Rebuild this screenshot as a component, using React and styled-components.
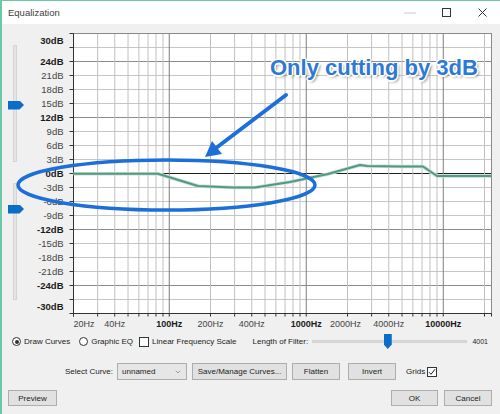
import React from 'react';
import styled, { createGlobalStyle } from 'styled-components';
import { ChevronDown } from 'lucide-react';

const Global = createGlobalStyle`
  html, body { margin: 0; padding: 0; background: #f0f0f0; }
  body { font-family: "Liberation Sans", Arial, sans-serif; }
`;

const Window = styled.div`
  width: 500px;
  height: 414px;
  box-sizing: border-box;
  border-top: 1px solid #6cc9a6;
  border-left: 2px solid #6cc9a6;
  background: #f0f0f0;
  display: flex;
  flex-direction: column;
  overflow: hidden;
`;

const TitleBar = styled.div`
  height: 23px;
  flex-shrink: 0;
  background: #fff;
  display: flex;
  align-items: center;
  padding-left: 6px;
`;

const Title = styled.span`
  flex: 1;
  font-size: 9.5px;
  color: #3c3c3c;
`;

const WinButton = styled.div`
  width: 36px;
  height: 23px;
  display: flex;
  align-items: center;
  justify-content: center;
`;

const ChartArea = styled.div`
  position: relative;
  height: 308px;
  flex-shrink: 0;
  display: flex;
`;

const SliderCol = styled.div`
  width: 28px;
  flex-shrink: 0;
  display: flex;
  flex-direction: column;
  gap: 21px;
  padding-top: 21px;
  padding-left: 11px;
  box-sizing: border-box;
`;

const VTrack = styled.div`
  position: relative;
  width: 4px;
  height: 117px;
  box-sizing: border-box;
  background: #e4e4e4;
  border: 1px solid #d4d4d4;
`;

const VThumb = styled.div`
  position: absolute;
  left: -6px;
  top: ${p => p.$at - 4.5}px;
  width: 16px;
  height: 9px;
  background: #0a6ec8;
  clip-path: polygon(0 0, 72% 0, 100% 50%, 72% 100%, 0 100%);
`;

const Overlay = styled.svg`
  position: absolute;
  left: 0;
  top: 0;
  pointer-events: none;
`;

const Callout = styled.span`
  position: absolute;
  left: 268px;
  top: 33px;
  font-family: "Liberation Sans", Arial, sans-serif;
  font-weight: bold;
  font-size: 22px;
  line-height: 1;
  white-space: nowrap;
  color: #2d79d6;
  text-shadow:
    -1px -1px 0 #fff, 1px -1px 0 #fff, -1px 1px 0 #fff, 1px 1px 0 #fff,
    0 -1.5px 0 #fff, 0 1.5px 0 #fff, -1.5px 0 0 #fff, 1.5px 0 0 #fff,
    2px 2px 3px rgba(0, 0, 0, 0.45);
`;

const Row = styled.div`
  display: flex;
  align-items: center;
  flex-shrink: 0;
  height: ${p => p.$h}px;
  margin-top: ${p => p.$mt || 0}px;
  padding-left: ${p => p.$pl || 0}px;
  padding-right: ${p => p.$pr || 0}px;
  font-size: 8px;
  color: #222;
`;

const Label = styled.span`
  margin-left: ${p => p.$ml || 0}px;
  white-space: nowrap;
  font-size: ${p => p.$fs || 8}px;
  color: #222;
`;

const Radio = styled.span`
  width: 9px;
  height: 9px;
  box-sizing: border-box;
  border-radius: 50%;
  border: 1px solid #333;
  background: #fff;
  margin-left: ${p => p.$ml || 0}px;
  display: flex;
  align-items: center;
  justify-content: center;
  &::after {
    content: '';
    width: 4px;
    height: 4px;
    border-radius: 50%;
    background: ${p => (p.$on ? '#333' : 'transparent')};
  }
`;

const Check = styled.span`
  width: 10px;
  height: 10px;
  box-sizing: border-box;
  border: 1px solid #333;
  background: #fff;
  margin-left: ${p => p.$ml || 0}px;
  display: flex;
  align-items: center;
  justify-content: center;
`;

const HTrack = styled.div`
  position: relative;
  flex: 1;
  height: 3px;
  margin-left: ${p => p.$ml || 0}px;
  background: #dcdcdc;
  border: 1px solid #d2d2d2;
  box-sizing: border-box;
`;

const HThumb = styled.div`
  position: absolute;
  left: calc(${p => p.$pos}% - 4px);
  top: -7px;
  width: 8px;
  height: 15px;
  background: #0a6ec8;
  clip-path: polygon(0 0, 100% 0, 100% 70%, 50% 100%, 0 70%);
`;

const Button = styled.div`
  width: ${p => p.$w}px;
  height: ${p => p.$hh || 17}px;
  margin-left: ${p => p.$ml || 0}px;
  box-sizing: border-box;
  border: 1px solid #adadad;
  background: #e1e1e1;
  display: flex;
  align-items: center;
  justify-content: center;
  font-size: 8px;
  color: #222;
  white-space: nowrap;
`;

const Select = styled.div`
  width: 70px;
  height: 17px;
  margin-left: ${p => p.$ml || 0}px;
  box-sizing: border-box;
  border: 1px solid #adadad;
  background: #e6e6e6;
  display: flex;
  align-items: center;
  padding: 0 4px 0 4px;
  font-size: 8px;
  color: #222;
  justify-content: space-between;
`;

const Spacer = styled.div`
  flex: 1;
`;

const fx = f => 73.5 + 137 * Math.log10(f / 20);
const dy = d => 173.5 - (d * 14) / 3;
const LEFT = 73.5;
const RIGHT = 491.5;
const TOP = dy(30);
const BOTTOM = dy(-30);

const freqs = [];
[10, 100, 1000, 10000].forEach(dec => {
  for (let k = 1; k <= 9; k++) {
    const f = k * dec;
    if (f > 20 && fx(f) < RIGHT - 2) freqs.push({ f, major: k === 1 });
  }
});

const dbs = [];
for (let d = -27; d <= 27; d += 3) dbs.push(d);

const dbLabels = [
  { d: 30, y: 40, b: true },
  { d: 24, b: true }, { d: 21 }, { d: 18 }, { d: 15 }, { d: 12, b: true },
  { d: 9 }, { d: 6 }, { d: 3 }, { d: 0, b: true }, { d: -3 }, { d: -6 },
  { d: -9 }, { d: -12, b: true }, { d: -15 }, { d: -18 }, { d: -21 },
  { d: -24, b: true }, { d: -30, y: 306, b: true },
];

const hzLabels = [
  { t: '20Hz', x: 73.5, a: 'start' },
  { t: '40Hz', x: fx(40) },
  { t: '100Hz', x: fx(100), b: true },
  { t: '200Hz', x: fx(200) },
  { t: '400Hz', x: fx(400) },
  { t: '1000Hz', x: fx(1000), b: true },
  { t: '2000Hz', x: fx(2000) - 2 },
  { t: '4000Hz', x: fx(4000) },
  { t: '10000Hz', x: fx(10000), b: true },
];

const curve = [
  [73.5, 173.8], [158, 173.8], [198, 186], [233, 187.5], [255, 187.5],
  [290, 182], [328, 174], [360, 165], [367, 166], [400, 166.5],
  [423, 166.5], [437, 176], [491, 176],
];

function Chart() {
  const pts = curve.map(p => p.join(',')).join(' ');
  return (
    <svg width="470" height="308" viewBox="30 24 470 308" style={{ display: 'block', flexShrink: 0 }}>
      <rect x={LEFT} y={TOP} width={RIGHT - LEFT} height={BOTTOM - TOP} fill="#fff" />
      {dbs.map(d => (
        <line key={'h' + d} x1={LEFT} x2={RIGHT} y1={dy(d)} y2={dy(d)}
          stroke={d === 0 ? '#1e1e1e' : d % 12 === 0 ? '#8c8c8c' : '#c6c6c6'}
          strokeWidth={d === 0 ? 1.2 : 1} />
      ))}
      {freqs.map(({ f, major }) => (
        <line key={'v' + f} x1={fx(f)} x2={fx(f)} y1={TOP} y2={BOTTOM}
          stroke={major ? '#7e7e7e' : '#c0c0c0'} strokeWidth="1" />
      ))}
      <rect x={LEFT} y={TOP} width={RIGHT - LEFT} height={BOTTOM - TOP} fill="none" stroke="#8a8a8a" strokeWidth="1" />
      <line x1={LEFT} x2={LEFT} y1={TOP} y2={BOTTOM + 3} stroke="#333" strokeWidth="1" />
      <line x1={LEFT - 1} x2={RIGHT} y1={BOTTOM} y2={BOTTOM} stroke="#333" strokeWidth="1" />
      {[...dbs, 30, -30].map(d => (
        <line key={'t' + d} x1={LEFT - 4} x2={LEFT} y1={dy(d)} y2={dy(d)} stroke="#333" strokeWidth="1" />
      ))}
      {[{ f: 20 }, ...freqs].map(({ f }) => (
        <line key={'bt' + f} x1={fx(f)} x2={fx(f)} y1={BOTTOM} y2={BOTTOM + 3} stroke="#333" strokeWidth="1" />
      ))}
      <line x1={RIGHT} x2={RIGHT} y1={BOTTOM} y2={BOTTOM + 3} stroke="#333" strokeWidth="1" />
      {dbLabels.map(({ d, y, b }) => (
        <text key={'l' + d} x="63.5" y={(y || dy(d)) + 3.5} textAnchor="end"
          fontFamily="Liberation Sans, Arial, sans-serif" fontSize="9.5"
          fontWeight={b ? 'bold' : 'normal'} fill={b ? '#1a1a1a' : '#444'}>
          {d}dB
        </text>
      ))}
      {hzLabels.map(({ t, x, a, b }) => (
        <text key={t} x={x} y="326.5" textAnchor={a || 'middle'}
          fontFamily="Liberation Sans, Arial, sans-serif" fontSize="9"
          fontWeight={b ? 'bold' : 'normal'} fill={b ? '#1a1a1a' : '#444'}>
          {t}
        </text>
      ))}
      <polyline points={pts} fill="none" stroke="#c9dcd5" strokeWidth="3.6" strokeLinejoin="round" />
      <polyline points={pts} fill="none" stroke="#4f9b80" strokeWidth="2" strokeLinejoin="round" />
    </svg>
  );
}

function Annotation() {
  return (
    <Overlay width="498" height="308" viewBox="2 24 498 308">
      <ellipse cx="166.5" cy="185" rx="148.5" ry="25" fill="none" stroke="#1c6fd9" strokeWidth="3.5" />
      <line x1="286" y1="95" x2="216" y2="148" stroke="#1c6fd9" strokeWidth="4" strokeLinecap="round" />
      <polygon points="205,157 212,141 222,154" fill="#1c6fd9" />
    </Overlay>
  );
}

export default function App() {
  return (
    <>
      <Global />
      <Window>
        <TitleBar>
          <Title>Equalization</Title>
          <WinButton>
            <svg width="12" height="2" viewBox="0 0 12 2"><line x1="0" y1="1" x2="12" y2="1" stroke="#c8c8c8" strokeWidth="1" /></svg>
          </WinButton>
          <WinButton>
            <svg width="9" height="9" viewBox="0 0 9 9"><rect x="0.5" y="0.5" width="8" height="8" fill="none" stroke="#333" strokeWidth="1" /></svg>
          </WinButton>
          <WinButton>
            <svg width="9" height="9" viewBox="0 0 9 9"><path d="M0.5 0.5 L8.5 8.5 M8.5 0.5 L0.5 8.5" stroke="#333" strokeWidth="1" /></svg>
          </WinButton>
        </TitleBar>

        <ChartArea>
          <SliderCol>
            <VTrack><VThumb $at={59} /></VTrack>
            <VTrack><VThumb $at={25} /></VTrack>
          </SliderCol>
          <Chart />
          <Annotation />
          <Callout>Only cutting by 3dB</Callout>
        </ChartArea>

        <Row $h={19} $pl={10} $pr={12}>
          <Radio $on />
          <Label $ml={3}>Draw Curves</Label>
          <Radio $ml={9} />
          <Label $ml={3}>Graphic EQ</Label>
          <Check $ml={6} />
          <Label $ml={3}>Linear Frequency Scale</Label>
          <Label $ml={16}>Length of Filter:</Label>
          <HTrack $ml={4}><HThumb $pos={48.7} /></HTrack>
          <Label $ml={5} $fs={7}>4001</Label>
        </Row>

        <Row $h={17} $mt={12} $pl={63}>
          <Label>Select Curve:</Label>
          <Select $ml={4}>
            <span>unnamed</span>
            <ChevronDown size={8} color="#555" strokeWidth={1.5} />
          </Select>
          <Button $w={95} $ml={5}>Save/Manage Curves...</Button>
          <Button $w={48} $ml={5}>Flatten</Button>
          <Button $w={48} $ml={8}>Invert</Button>
          <Label $ml={10}>Grids</Label>
          <Check $ml={2}>
            <svg width="8" height="8" viewBox="0 0 8 8"><path d="M1 4.2 L3 6.3 L7 1.2" fill="none" stroke="#222" strokeWidth="1" /></svg>
          </Check>
        </Row>

        <Row $h={16} $mt={10} $pl={6} $pr={8}>
          <Button $w={49} $hh={16}>Preview</Button>
          <Spacer />
          <Button $w={47} $hh={16}>OK</Button>
          <Button $w={48} $hh={16} $ml={6}>Cancel</Button>
        </Row>
      </Window>
    </>
  );
}
